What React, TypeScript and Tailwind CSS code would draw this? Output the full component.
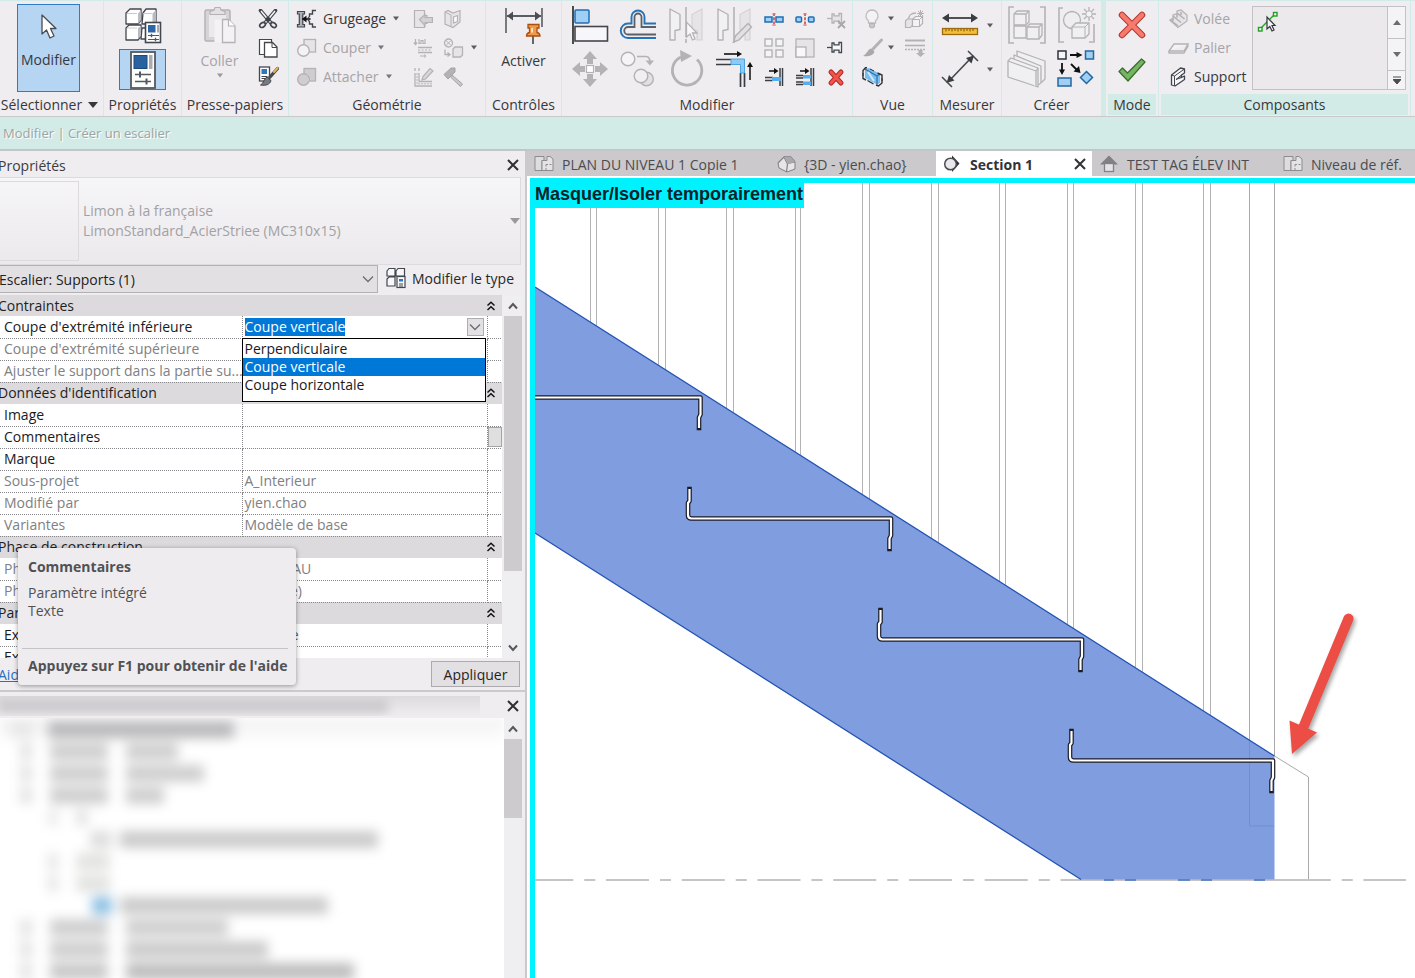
import type { ReactNode } from "react";

/* ---------- shared drawing helpers ---------- */

type SvgProps = { w: number; h: number; children: ReactNode };

function Svg({ w, h, children }: SvgProps) {
  return (
    <svg width={w} height={h} viewBox={`0 0 ${w} ${h}`} fill="none" className="block shrink-0" aria-hidden="true">
      {children}
    </svg>
  );
}

const G = "#b4b2b5";
const GF = "#e6e4e7";
const D = "#43474d";
const B = "#1f6fb5";
const BF = "#9fd0f3";

function Caret({ className = "text-[#5c5c60]" }: { className?: string }) {
  return (
    <svg width="8" height="5" viewBox="0 0 8 5" className={`block shrink-0 ${className}`} aria-hidden="true">
      <path d="M1 .5h6L4 4.5z" fill="currentColor" />
    </svg>
  );
}

function WideCaret({ className }: { className: string }) {
  return (
    <svg width="10" height="6" viewBox="0 0 10 6" className={`block shrink-0 ${className}`} aria-hidden="true">
      <path d="M0 0h10L5 6z" fill="currentColor" />
    </svg>
  );
}

function Cross({ size = 14 }: { size?: number }) {
  return (
    <svg width={size} height={size} viewBox="0 0 14 14" className="block shrink-0" aria-hidden="true">
      <path d="M2 2l10 10M12 2L2 12" stroke="#303034" strokeWidth="2" />
    </svg>
  );
}

function Chevron({ up = false }: { up?: boolean }) {
  return (
    <svg width="12" height="8" viewBox="0 0 12 8" className="block shrink-0" fill="none" aria-hidden="true">
      <path d={up ? "M2 6.5l4-4.5 4 4.5" : "M2 1.5L6 6l4-4.5"} stroke="#58585c" strokeWidth="2" />
    </svg>
  );
}

function ThinChevron() {
  return (
    <svg width="12" height="8" viewBox="0 0 12 8" className="block shrink-0" fill="none" aria-hidden="true">
      <path d="M1 1.500l5 5 5-5" stroke="#6c6c70" strokeWidth="1.300" />
    </svg>
  );
}

function DoubleChevron() {
  return (
    <svg width="10" height="10" viewBox="0 0 10 10" className="block" fill="none" aria-hidden="true">
      <path d="M1.5 4.5L5 1.3l3.5 3.2M1.5 9L5 5.8 8.5 9" stroke="#111" strokeWidth="1.5" />
    </svg>
  );
}

/* ---------- ribbon icons ---------- */

const CursorIcon = () => (
  <Svg w={20} h={28}>
    <path d="M3 2v19l4.5-4 3.5 8 4-2-3.500-7.500H17z" fill="#fff" stroke="#4a4d52" strokeWidth="1.3" strokeLinejoin="round" />
  </Svg>
);

const TypePropsIcon = () => (
  <Svg w={38} h={38}>
    <g stroke={D} strokeWidth="1.3" strokeLinejoin="round">
      <path d="M2 6l4-4h11v11l-3 4H2z" fill="#fff" />
      <path d="M19 6l3-4h10v14l-3 1H18z" fill="#fff" />
      <path d="M2 21l3-3h12v11l-3 4H2z" fill="#fff" />
      <path d="M18 21h5v11h-6z" fill="#fff" />
    </g>
    <path d="M14 6.500L17 3v10l-3 4zM28.500 6.500L32 3v12h-3.500zM14 21l3-2v10l-3 3z" fill="#b9bbc0" />
    <path d="M3 6.500h10M19 6.500h9M3 21h10" stroke="#c9cacd" />
    <rect x="21.500" y="15.500" width="15" height="20" fill="#fff" stroke={D} strokeWidth="1.6" />
    <rect x="24" y="18" width="7.500" height="7.500" fill="#2c66a8" />
    <rect x="33" y="18" width="2" height="7.500" fill="#a8aab0" />
    <path d="M24 28.500h11M24 32.500h11" stroke="#54575d" strokeWidth="1.2" />
    <path d="M27.500 26.800v3.400M31.500 30.800v3.400" stroke="#54575d" strokeWidth="1.4" />
  </Svg>
);

const PropsIcon = () => (
  <Svg w={28} h={38}>
    <rect x="2" y="1" width="24" height="36" fill="#fdfdfd" stroke="#55585e" strokeWidth="1.800" />
    <rect x="5" y="4.500" width="13" height="13" fill="#2a629f" stroke="#1b4a80" />
    <rect x="20" y="4" width="3.500" height="14" fill="#a9abb1" />
    <path d="M6 23.500h16M6 30.500h16" stroke="#54575d" strokeWidth="1.5" />
    <path d="M11 20.500v6M17.500 27.500v6" stroke="#54575d" strokeWidth="2" />
  </Svg>
);

const PasteIcon = () => (
  <Svg w={34} h={38}>
    <rect x="2" y="4" width="25" height="31" rx="1.500" fill="#d6d4d7" stroke={G} strokeWidth="1.500" />
    <path d="M6 8h17v23H6z" fill="#ebe9ec" />
    <path d="M7 8.500V5.500l4-1.500 1-2.500h5L18 4l4 1.500v3z" fill="#e2e0e3" stroke={G} strokeWidth="1.200" />
    <path d="M11.500 13.500h12l8 8v15h-20z" fill="#f3f2f4" />
    <path d="M19.500 13.500h6l6.500 6.500v16.500H19.500z" fill="#f3f2f4" stroke={G} strokeWidth="1.300" />
    <path d="M25.500 13.500v6.500h6.500" stroke={G} strokeWidth="1.200" fill="#fff" />
  </Svg>
);

const ScissorsIcon = () => (
  <Svg w={20} h={20}>
    <path d="M2.500 1.500L13 14M17.500 1.500L7 14" stroke={D} strokeWidth="3.600" strokeLinecap="round" />
    <path d="M3 2l9.500 11.500M17 2L7.500 13.500" stroke="#f7f7f7" strokeWidth="1.500" />
    <circle cx="10" cy="10.500" r="2.400" fill="#3c3f44" />
    <ellipse cx="4.500" cy="16" rx="3" ry="2.200" transform="rotate(-35 4.500 16)" stroke={D} strokeWidth="1.700" fill="#efedf0" />
    <ellipse cx="15.500" cy="16" rx="3" ry="2.200" transform="rotate(35 15.500 16)" stroke={D} strokeWidth="1.700" fill="#efedf0" />
  </Svg>
);

const CopyIcon = () => (
  <Svg w={20} h={20}>
    <path d="M1.500 1.500h12v15h-12z" fill="#fff" stroke={D} strokeWidth="1.200" />
    <path d="M6.500 4.500h8l4.500 4.500v10H6.500z" fill="#fff" stroke={D} strokeWidth="1.300" />
    <path d="M14 4.500V9.500h5" stroke={D} />
  </Svg>
);

const MatchIcon = () => (
  <Svg w={21} h={21}>
    <rect x="1.500" y="1" width="10" height="14" fill="#fff" stroke={D} strokeWidth="1.300" />
    <rect x="3.500" y="3" width="5.500" height="5" fill="#2c78c0" />
    <path d="M3.500 10.500h6M3.500 12.500h4" stroke={D} />
    <path d="M19.500 2.500L12 11" stroke="#4a4a4a" strokeWidth="3.400" strokeLinecap="round" />
    <path d="M19.500 2L16 6" stroke="#e3b264" strokeWidth="2" strokeLinecap="round" />
    <path d="M9 11l4 3.500c-1 4-5 5.500-10.500 4.500C6 17.500 6 12 9 11z" fill="#777a80" stroke={D} />
  </Svg>
);

const CopeIcon = () => (
  <Svg w={21} h={20}>
    <path d="M1.500 2.500h7v2.500H6.800v10.500h1.700V18h-7v-2.500h1.800V5H1.500z" fill="#aeb1b8" stroke={D} strokeWidth="1.200" />
    <path d="M6.500 10h8" stroke="#111" strokeWidth="1.700" />
    <path d="M6 10l4.500-3.500v7z" fill="#111" />
    <path d="M20 1.500h-3.500V5h-3v2.500c-1.500 1-1.500 1.500-1.500 2.500s0 1.500 1.500 2.500V15h3v3H20" stroke={D} strokeWidth="1.400" />
  </Svg>
);

const CutIcon = ({ joined = false }: { joined?: boolean }) => (
  <Svg w={21} h={20}>
    <rect x="8" y="1.500" width="11.500" height="12.500" fill={joined ? "#cfcdd0" : GF} stroke={G} strokeWidth="1.300" />
    <circle cx="7.500" cy="12.500" r="5.800" fill={joined ? "#cfcdd0" : "#f3f2f4"} stroke={G} strokeWidth="1.400" />
    {joined && <path d="M10 8.500v4h3" stroke="#cfcdd0" strokeWidth="3" />}
  </Svg>
);

const WallJoinIcon = () => (
  <Svg w={20} h={20}>
    <path d="M1.500 1.500h10v5H14v8h-2.500v4h-10z" fill={GF} stroke={G} strokeWidth="1.200" />
    <path d="M6.500 10.500l5.500-5v3h7.500v5H12v3z" fill="#d3d1d4" stroke={G} strokeWidth="1.200" />
  </Svg>
);

const PanelIcon = () => (
  <Svg w={20} h={20}>
    <path d="M2 3l3-1.500 5 2.500 7-2.500v11.500L10 18.500 2 15z" fill={GF} stroke={G} strokeWidth="1.200" />
    <path d="M2 3l6 3v12" stroke={G} />
    <path d="M10.500 8l4-1.500v6l-4 1.500z" fill="#fafafa" stroke={G} strokeWidth="1.200" />
  </Svg>
);

const BeamJoinIcon = () => (
  <Svg w={20} h={20}>
    <path d="M2.500 1v5M.800 4.500L2.500 6.500l1.700-2M6 1v4.500h2V2.500h2V5.500h2V1" stroke={G} strokeWidth="1.200" />
    <path d="M5 9.500h14M5 14.500h14" stroke={G} strokeWidth="1.500" />
    <path d="M5 12h14" stroke={G} strokeDasharray="2 1.500" />
    <path d="M7 18h6M11 16.500l2 1.500L11 19.500" stroke={G} />
  </Svg>
);

const SplitIcon = () => (
  <Svg w={21} h={20}>
    <circle cx="5.500" cy="5" r="4" stroke={G} strokeWidth="1.300" />
    <path d="M3 2.500l5 5M8 2.500l-5 5" stroke={G} />
    <path d="M2 11.500v5h4M4.500 14.500l2.500 2-2.500 2" stroke={G} strokeWidth="1.300" />
    <path d="M10 11l2-2h7.500v8l-2 2H10z" fill={GF} stroke={G} strokeWidth="1.300" />
  </Svg>
);

const EditJoinIcon = () => (
  <Svg w={21} h={20}>
    <path d="M2 6v13h17M6 6v8.500h13" stroke={G} strokeWidth="1.300" />
    <path d="M4 6v10.800h15" stroke={G} strokeDasharray="2 1" />
    <path d="M2 1v3M6 1v3" stroke={G} strokeWidth="1.300" />
    <path d="M9 13l1-3.500L17 1.500l3 2.500-7.500 8z" fill="#d9d7da" stroke={G} strokeWidth="1.200" />
  </Svg>
);

const HammerIcon = () => (
  <Svg w={21} h={20}>
    <path d="M9 8l10.500 9-2 2.500L7.500 10z" fill="#c9c7ca" stroke="#a4a2a6" />
    <path d="M1 7.500L8 1h4v4L5 12z" fill="#b4b2b5" stroke="#a4a2a6" />
  </Svg>
);

const ActivateIcon = () => (
  <Svg w={40} h={38}>
    <path d="M2 2v25M38 2v19" stroke="#5a5d62" strokeWidth="1.600" />
    <path d="M3 10h34" stroke="#5a5d62" strokeWidth="2" />
    <path d="M3 10l6-4.500v9zM37 10l-6-4.500v9z" fill="#4a4d52" />
    <path d="M29 30v8" stroke="#55585e" strokeWidth="1.800" />
    <path d="M24 18.500h11v3.500h-2v4.500c2 .5 3 2 3 3.500H22.500c0-1.500 1-3 3-3.500V22H24z" fill="#f29a4c" stroke="#a84f12" strokeWidth="1.300" />
    <path d="M28 22v4.500" stroke="#fde0c0" strokeWidth="2" />
  </Svg>
);

const AlignIcon = () => (
  <Svg w={38} h={38}>
    <path d="M2 0v38" stroke="#222" strokeWidth="1.600" />
    <rect x="4" y="4" width="14" height="13" rx="1" fill={BF} stroke={B} strokeWidth="1.500" />
    <rect x="4" y="20.500" width="32.500" height="14.500" fill="#f7f6f8" stroke={D} strokeWidth="1.600" />
  </Svg>
);

const OffsetIcon = () => (
  <Svg w={38} h={38}>
    <path d="M37 17.500H25.500V11a6.500 6.500 0 0 0-13 0v6.500H9a7.200 7.200 0 0 0 0 14.500h28" stroke="#2573b8" strokeWidth="1.900" />
    <path d="M37 21H22.500V11a3.500 3.500 0 0 0-7 0v10H9a3.700 3.700 0 0 0 0 7.500H37" stroke="#5c5f65" strokeWidth="1.800" />
  </Svg>
);

const MirrorIcon = ({ pencil = false }: { pencil?: boolean }) => (
  <Svg w={38} h={38}>
    <path d="M3 3l10 5.500v15l-5 1V34H3z" fill="#f1f0f2" stroke={G} strokeWidth="1.400" strokeLinejoin="round" />
    <path d="M35 3L25 8.500v15l5 1V34h5z" fill="#e6e4e7" stroke="#d4d2d5" strokeWidth="1.200" />
    <path d="M19 1v36" stroke={G} strokeWidth="1.600" strokeDasharray={pencil ? undefined : "30 2"} />
    {pencil ? (
      <path d="M18.500 36l2-6L33 17.500l3.500 3.500L24 34z" fill="#e2e0e3" stroke={G} strokeWidth="1.400" />
    ) : (
      <path d="M19.500 16v15l3.500-3 2.500 6 2.500-1-2.500-6H30z" fill="#f8f7f9" stroke={G} strokeWidth="1.300" />
    )}
  </Svg>
);

const MoveIcon = () => (
  <Svg w={38} h={38}>
    <g fill={G}>
      <path d="M19 1l7 8h-4v5h-6V9h-4z" />
      <path d="M19 37l7-8h-4v-5h-6v5h-4z" />
      <path d="M1 19l8-7v4h5v6H9v4z" />
      <path d="M37 19l-8-7v4h-5v6h5v4z" />
    </g>
    <rect x="15.500" y="15.500" width="7" height="7" fill="#fff" stroke={G} strokeWidth="1.200" />
  </Svg>
);

const CopyMoveIcon = () => (
  <Svg w={38} h={38}>
    <circle cx="9" cy="9" r="6.800" fill="#f5f4f6" stroke={G} strokeWidth="1.400" />
    <path d="M18 6.500h9c3 0 4 2 4 6" stroke={G} strokeWidth="1.700" />
    <path d="M26.500 10.500h8.500l-4 5z" fill={G} />
    <circle cx="27.500" cy="29" r="6.800" fill="#e2e0e3" stroke={G} strokeWidth="1.400" />
    <circle cx="22" cy="26" r="6.800" fill="#f0eff1" stroke={G} strokeWidth="1.400" />
  </Svg>
);

const RotateIcon = () => (
  <Svg w={38} h={38}>
    <path d="M30 9.500A14.700 14.700 0 1 1 14 7" stroke={G} strokeWidth="2.800" />
    <path d="M13 0l12 6-11 6z" fill={G} />
  </Svg>
);

const TrimIcon = () => (
  <Svg w={38} h={38}>
    <path d="M9 4h15" stroke="#111" strokeWidth="1.600" />
    <path d="M22 1l5 3-5 3z" fill="#111" />
    <path d="M1 9.500h15M1 14.500h15M25.500 23v14M29.500 23v14" stroke="#3a3d42" strokeWidth="1.700" />
    <path d="M16 9h13.500v14h-4V14.500H16z" fill="#8ccbf6" stroke="#4fa3e0" />
    <path d="M35 30V14" stroke="#111" strokeWidth="1.500" />
    <path d="M32 17l3-5 3 5z" fill="#111" />
  </Svg>
);

const SplitElIcon = ({ gap = false }: { gap?: boolean }) => (
  <Svg w={20} h={16}>
    {gap ? (
      <g fill={BF} stroke={B} strokeWidth="1.500">
        <rect x="1" y="6" width="5.500" height="5" rx="1" />
        <rect x="13.500" y="6" width="5.500" height="5" rx="1" />
      </g>
    ) : (
      <g fill={BF} stroke={B} strokeWidth="1.500">
        <rect x="1" y="6" width="7" height="5" />
        <rect x="12" y="6" width="7" height="5" />
      </g>
    )}
    <path d="M10 2v13" stroke="#d23b33" strokeWidth="1.500" strokeDasharray="3 1.200" />
    <path d="M8 3h4M8 14h4" stroke="#e08a84" />
  </Svg>
);

const PinIcon = ({ off = false }: { off?: boolean }) => (
  <Svg w={20} h={20}>
    <path d="M1 9.500h5" stroke={off ? G : D} strokeWidth="1.300" />
    <path d="M6 5v9h2v-1.800h5V14.500h2.500v-10H13V6.800H8V5z" fill={off ? GF : "#f8f8f8"} stroke={off ? G : D} strokeWidth="1.300" />
    {off && <path d="M12 12l7 7M19 12l-7 7" stroke="#a9a7aa" strokeWidth="1.800" />}
  </Svg>
);

const ArrayIcon = () => (
  <Svg w={20} h={20}>
    <g fill="#f5f4f6" stroke={G} strokeWidth="1.400">
      <rect x="1" y="1" width="7" height="7" />
      <rect x="12" y="1" width="7" height="7" />
      <rect x="1" y="12" width="7" height="7" />
      <rect x="12" y="12" width="7" height="7" />
    </g>
  </Svg>
);

const ScaleIcon = () => (
  <Svg w={20} h={20}>
    <rect x="1" y="1" width="18" height="18" fill={GF} stroke={G} strokeWidth="1.300" />
    <rect x="1" y="9" width="10" height="10" fill="#f8f7f9" stroke={G} strokeWidth="1.300" />
  </Svg>
);

const ExtendIcon = ({ multi = false }: { multi?: boolean }) => (
  <Svg w={20} h={20}>
    <path d="M5 4h6" stroke="#111" strokeWidth="1.500" />
    <path d="M10 1l4.500 3L10 7z" fill="#111" />
    <path d="M16 1v18M18.500 1v18" stroke="#3a3d42" strokeWidth="1.500" />
    {multi ? (
      <>
        <path d="M1 8.500h7M1 11h7M1 15h7M1 17.500h7" stroke="#3a3d42" strokeWidth="1.300" />
        <path d="M8 9.800h8M8 16.200h8" stroke="#58aeea" strokeWidth="3.600" />
      </>
    ) : (
      <>
        <path d="M1 10.500h8M1 13.500h8" stroke="#3a3d42" strokeWidth="1.300" />
        <path d="M8 12h9" stroke="#58aeea" strokeWidth="4" />
      </>
    )}
  </Svg>
);

const DeleteIcon = () => (
  <Svg w={20} h={20}>
    <path d="M5 5l10 11M15 5L5 16" stroke="#b02a25" strokeWidth="5" strokeLinecap="round" />
    <path d="M5 5l10 11M15 5L5 16" stroke="#f2544c" strokeWidth="3" strokeLinecap="round" />
  </Svg>
);

const BulbIcon = () => (
  <Svg w={20} h={20}>
    <path d="M10 1a6 6 0 0 0-3.500 10.800V14h7v-2.200A6 6 0 0 0 10 1z" fill="#f3f2f4" stroke="#c0bec1" strokeWidth="1.300" />
    <path d="M7.500 14.500h5v3.500l-2.500 1-2.500-1z" fill="#c8c6c9" stroke={G} />
  </Svg>
);

const ShapesStarIcon = () => (
  <Svg w={22} h={20}>
    <path d="M5 10c-1-3 2-6 7-6" stroke={G} strokeWidth="1.300" />
    <path d="M1.500 12l2-2h5v6l-2 2.500h-5z" fill={GF} stroke={G} strokeWidth="1.200" />
    <path d="M8.500 10.500l3-3h7v7l-3 3h-7z" fill="#f3f2f4" stroke={G} strokeWidth="1.200" />
    <path d="M8.500 10.500h7v7M15.500 10.500l3-3" stroke={G} />
    <path d="M16.500 1v7M13 4.500h7M14 2l5 5M19 2l-5 5" stroke={G} />
  </Svg>
);

const BrushIcon = () => (
  <Svg w={21} h={20}>
    <path d="M19.500 2L11 11" stroke={G} strokeWidth="3" strokeLinecap="round" />
    <path d="M9 10.500l3.500 3c-1 4-6 5.500-11.500 4.500C4.500 16.500 6 11 9 10.500z" fill="#aaa8ab" />
  </Svg>
);

const LinesIcon = () => (
  <Svg w={22} h={20}>
    <path d="M1 2.500h20" stroke={G} strokeWidth="2" />
    <path d="M1 7.500h20" stroke={G} strokeWidth="1.600" />
    <path d="M1 11.500h20" stroke={G} strokeWidth="1.300" strokeDasharray="2 1" />
    <path d="M14.500 12h4v3h2.500l-4.500 4-4.500-4h2.500z" fill={G} />
  </Svg>
);

const BoxIcon = () => (
  <Svg w={21} h={20}>
    <path d="M3 2l4-1 11 6v9l-3 1.500L3 11z" fill="#79bdf0" />
    <path d="M3 2l12 7v8.500M15 9l3-2" stroke="#2f6fa8" strokeWidth="1.200" />
    <path d="M6 5l6 9" stroke="#cfe8fb" strokeWidth="2" />
    <path d="M5 .800H3.500L1 3.500v8L4 13M15.500 6L20 8v8l-3.500 3-2.500-1M5.500 13.500l6 3.500" stroke="#2f3338" strokeWidth="1.400" />
    <path d="M1 6v3M20 11v3M8 2l4 2" stroke="#2f3338" />
  </Svg>
);

const MeasureIcon = () => (
  <Svg w={38} h={26}>
    <path d="M5 6h28" stroke="#333" strokeWidth="1.700" />
    <path d="M1 6l7-4.500v9zM37 6l-7-4.500v9z" fill="#3a3d42" />
    <rect x="1.500" y="16.500" width="35" height="6" fill="#f3be35" stroke="#9b6c12" strokeWidth="1.300" />
    <path d="M5 17v2.500M8 17v2M11 17v2.500M14 17v2M17 17v2.500M20 17v2M23 17v2.500M26 17v2M29 17v2.500M32 17v2" stroke="#7c5408" />
  </Svg>
);

const DimensionIcon = () => (
  <Svg w={38} h={38}>
    <path d="M1 27l10 10M27 1l10 10" stroke="#44474c" strokeWidth="1.500" />
    <path d="M8 31L31 7" stroke="#44474c" strokeWidth="1.600" />
    <path d="M5.500 33l2.500-8 5.500 5.500zM33 5.500l-2.500 8L25 8z" fill="#3a3d42" />
  </Svg>
);

const GroupIcon = () => (
  <Svg w={40} h={40}>
    <path d="M7 2H2v36h5M33 2h5v36h-5" stroke={G} strokeWidth="1.600" />
    <g fill="#f0eff1" stroke={G} strokeWidth="1.300" strokeLinejoin="round">
      <path d="M7 9l3-3h12v11l-3 3H7z" />
      <path d="M7 21h12v12H7z" />
      <path d="M20 22l3-3h12v11l-3 4H20z" />
      <path d="M7 9h12v11M19 9l3-3M20 22h12v11M32 22l3-3" />
    </g>
  </Svg>
);

const AssemblyIcon = () => (
  <Svg w={40} h={40}>
    <path d="M7 3H3v34h5M33 37h5V19" stroke={G} strokeWidth="1.600" />
    <circle cx="16" cy="15" r="8.500" fill="#eeedef" stroke={G} strokeWidth="1.300" />
    <path d="M16 22l4-4h13v11l-4 4H16z" fill="#f0eff1" stroke={G} strokeWidth="1.300" />
    <path d="M16 22h13v11M29 22l4-4" stroke={G} />
    <path d="M33 2v14M26 9h14M28 4l10 10M38 4L28 14" stroke={G} strokeWidth="1.300" />
    <circle cx="33" cy="9" r="3.200" fill="#f4f3f5" stroke={G} />
  </Svg>
);

const PartsIcon = () => (
  <Svg w={42} h={40}>
    <g fill="#f0eff1" stroke={G} strokeWidth="1.300" strokeLinejoin="round">
      <path d="M11 2l28 10v18l-3 3L11 20z" />
      <path d="M8 6l27 11v17l-3 2L8 22z" />
      <path d="M2 12l3-3 27 10v19L2 28z" />
      <path d="M2 12l28 10v16M30 22l2-3" />
    </g>
  </Svg>
);

const SimilarIcon = () => (
  <Svg w={40} h={40}>
    <rect x="2" y="2" width="8" height="8" fill="#f6f5f7" stroke="#2e3237" strokeWidth="1.500" />
    <path d="M14 6h8M6 14v8M15 15l6 6" stroke="#111" strokeWidth="1.800" />
    <path d="M20.500 3l6 3-6 3zM3 20.500h6l-3 5.500zM24.500 24l-1.500-7-5.500 5.500z" fill="#111" />
    <g fill={BF} stroke="#25679f" strokeWidth="1.500">
      <rect x="29.500" y="2" width="8" height="8" />
      <rect x="2" y="29" width="13" height="8" />
      <path d="M30.500 22.500l6 6-6 6-6-6z" />
    </g>
  </Svg>
);

const CancelIcon = () => (
  <Svg w={30} h={30}>
    <path d="M5 6l20 20M25 6L5 26" stroke="#b4372f" strokeWidth="6.500" strokeLinecap="round" />
    <path d="M5 6l20 20M25 6L5 26" stroke="#f77a6f" strokeWidth="4.500" strokeLinecap="round" />
  </Svg>
);

const AcceptIcon = () => (
  <Svg w={30} h={26}>
    <path d="M2 14.500L5.500 11l5 5L24.500 2 28 5 11 24z" fill="#78b562" stroke="#39702a" strokeWidth="1.300" strokeLinejoin="round" />
  </Svg>
);

const RunIcon = () => (
  <Svg w={22} h={20}>
    <path d="M2 11l3-2v-3l4-1.500V2l4-1 6 5v6l-9 6.500z" fill={GF} stroke={G} strokeWidth="1.200" />
    <path d="M2 11l8 6M5 7l8 6.500M9 4l7.500 6M5 9v3M9 5v3.500M13 3v3" stroke={G} strokeWidth="1.600" />
  </Svg>
);

const LandingIcon = () => (
  <Svg w={22} h={20}>
    <path d="M1 13l5-7h14l-4 7zM1 13v2h15l4-7V6" fill="#f3f2f4" stroke={G} strokeWidth="1.300" />
  </Svg>
);

const SupportIcon = () => (
  <Svg w={22} h={22}>
    <path d="M3.500 9L12.500 2l4 1v4l-3 2v2.500l3-1.500v3.500L7 20l-3.500-1z" fill="#f6f6f8" stroke={D} strokeWidth="1.300" strokeLinejoin="round" />
    <path d="M3.500 9l3 1 10-7M6.500 10v9.500" stroke={D} />
    <path d="M13.500 9L8 13.500l5.500-2z" fill="#8d9096" stroke={D} />
  </Svg>
);

const PickLineIcon = () => (
  <Svg w={22} h={22}>
    <path d="M3 18L18 3" stroke="#28a428" strokeWidth="1.500" />
    <rect x="1.500" y="16.500" width="3.500" height="3.500" fill="#fff" stroke="#1fa01f" strokeWidth="1.400" />
    <rect x="16.500" y="1.500" width="3.500" height="3.500" fill="#fff" stroke="#1fa01f" strokeWidth="1.400" />
    <path d="M10 6v12l2.800-2.500L15 20l2-1-2-4.500h3z" fill="#f4f4f6" stroke="#33363b" strokeWidth="1.200" />
  </Svg>
);

/* ---------- ribbon ---------- */

function Panel({ title, width, tinted = false, children }: { title: ReactNode; width: string; tinted?: boolean; children: ReactNode }) {
  return (
    <section className={`flex flex-col border-r border-[#d3ebe8] ${width}`}>
      <div className="flex h-[93px]">{children}</div>
      <h2 className={`flex h-[21px] items-center justify-center ${tinted ? "mx-0.5 bg-[#d3ebe7]" : ""}`}>{title}</h2>
    </section>
  );
}

function IconButton({ label, size, children }: { label: string; size: string; children: ReactNode }) {
  return (
    <button type="button" aria-label={label} title={label} className={`flex shrink-0 items-center justify-center ${size}`}>
      {children}
    </button>
  );
}

const SMALL = "h-[29px] w-[22px]";
const LARGE = "h-[44px] w-12";

function Ribbon() {
  return (
    <div className="flex h-[117px] shrink-0 overflow-hidden border-t border-b border-t-[#d3ebe8] border-b-[#c9c9cc] bg-[#efedf0]">
      <Panel
        title={
          <button type="button" className="-ml-1 flex items-center gap-1.5">
            Sélectionner
            <WideCaret className="text-[#38383c]" />
          </button>
        }
        width="w-[104px]"
      >
        <button type="button" className="mt-[3px] ml-[17px] flex h-[88px] w-[63px] flex-col items-center border border-[#2f7cc4] bg-[#b5d5f2] pt-2">
          <CursorIcon />
          <span className="mt-2">Modifier</span>
        </button>
      </Panel>

      <Panel title="Propriétés" width="w-[78px]">
        <div className="flex grow flex-col items-center pt-[5px]">
          <IconButton label="Propriétés du type" size="h-10 w-12"><TypePropsIcon /></IconButton>
          <button type="button" aria-label="Propriétés" className="mt-[3px] flex h-[41px] w-[47px] items-center justify-center border border-[#2f7cc4] bg-[#b5d5f2]">
            <PropsIcon />
          </button>
        </div>
      </Panel>

      <Panel title="Presse-papiers" width="w-[107px]">
        <button type="button" disabled className="flex w-[75px] flex-col items-center pt-[5px] text-[#a6a4a7]">
          <PasteIcon />
          <span className="mt-1.5">Coller</span>
          <Caret className="mt-0.5 text-[#9a989b]" />
        </button>
        <div className="flex flex-col pt-[3px]">
          <IconButton label="Couper dans le presse-papiers" size={SMALL}><ScissorsIcon /></IconButton>
          <IconButton label="Copier dans le presse-papiers" size={SMALL}><CopyIcon /></IconButton>
          <IconButton label="Harmoniser les propriétés" size={SMALL}><MatchIcon /></IconButton>
        </div>
      </Panel>

      <Panel title="Géométrie" width="w-[197px]">
        <div className="flex w-[123px] flex-col pt-[3px] pl-[7px]">
          <button type="button" className="flex h-[29px] items-center gap-1.5"><CopeIcon />Grugeage<Caret /></button>
          <button type="button" className="flex h-[29px] items-center gap-1.5 text-[#a6a4a7]"><CutIcon />Couper<Caret className="text-[#77757a]" /></button>
          <button type="button" className="flex h-[29px] items-center gap-1.5 text-[#a6a4a7]"><CutIcon joined />Attacher<Caret className="text-[#77757a]" /></button>
        </div>
        <div className="flex flex-col pt-[3px]">
          <IconButton label="Attache de toit" size={SMALL}><WallJoinIcon /></IconButton>
          <IconButton label="Attaches de poutres" size={SMALL}><BeamJoinIcon /></IconButton>
          <IconButton label="Jonctions de murs" size={SMALL}><EditJoinIcon /></IconButton>
        </div>
        <div className="ml-2 flex flex-col pt-[3px]">
          <IconButton label="Diviser la face" size={SMALL}><PanelIcon /></IconButton>
          <div className="flex items-center gap-1.5">
            <IconButton label="Peindre" size={SMALL}><SplitIcon /></IconButton>
            <Caret />
          </div>
          <IconButton label="Démolir" size={SMALL}><HammerIcon /></IconButton>
        </div>
      </Panel>

      <Panel title="Contrôles" width="w-[76px]">
        <button type="button" className="flex grow flex-col items-center pt-[5px]">
          <ActivateIcon />
          <span className="mt-1.5">Activer</span>
        </button>
      </Panel>

      <Panel title="Modifier" width="w-[291px]">
        <div className="grid grid-cols-4 content-start pt-[2px] pl-1">
          <IconButton label="Aligner" size={LARGE}><AlignIcon /></IconButton>
          <IconButton label="Décaler" size={LARGE}><OffsetIcon /></IconButton>
          <IconButton label="Symétrie - Choisir l'axe" size={LARGE}><MirrorIcon /></IconButton>
          <IconButton label="Symétrie - Dessiner l'axe" size={LARGE}><MirrorIcon pencil /></IconButton>
          <IconButton label="Déplacer" size={LARGE}><MoveIcon /></IconButton>
          <IconButton label="Copier" size={LARGE}><CopyMoveIcon /></IconButton>
          <IconButton label="Rotation" size={LARGE}><RotateIcon /></IconButton>
          <IconButton label="Ajuster en angle" size={LARGE}><TrimIcon /></IconButton>
        </div>
        <div className="ml-[5px] grid grid-cols-3 content-start gap-x-[9px] pt-[3px]">
          <IconButton label="Scinder l'élément" size={SMALL}><SplitElIcon /></IconButton>
          <IconButton label="Scinder avec espace" size={SMALL}><SplitElIcon gap /></IconButton>
          <IconButton label="Déverrouiller" size={SMALL}><PinIcon off /></IconButton>
          <IconButton label="Réseau" size={SMALL}><ArrayIcon /></IconButton>
          <IconButton label="Mettre à l'échelle" size={SMALL}><ScaleIcon /></IconButton>
          <IconButton label="Verrouiller" size={SMALL}><PinIcon /></IconButton>
          <IconButton label="Prolonger un élément" size={SMALL}><ExtendIcon /></IconButton>
          <IconButton label="Prolonger plusieurs éléments" size={SMALL}><ExtendIcon multi /></IconButton>
          <IconButton label="Supprimer" size={SMALL}><DeleteIcon /></IconButton>
        </div>
      </Panel>

      <Panel title="Vue" width="w-[80px]">
        <div className="flex flex-col pt-[3px] pl-2">
          <div className="flex items-center gap-1"><IconButton label="Masquer dans la vue" size={SMALL}><BulbIcon /></IconButton><Caret /></div>
          <div className="flex items-center gap-1"><IconButton label="Remplacer les graphismes" size={SMALL}><BrushIcon /></IconButton><Caret /></div>
          <IconButton label="Zone de sélection" size={SMALL}><BoxIcon /></IconButton>
        </div>
        <div className="ml-[9px] flex flex-col pt-[3px]">
          <IconButton label="Afficher les éléments cachés" size={SMALL}><ShapesStarIcon /></IconButton>
          <IconButton label="Style de ligne" size={SMALL}><LinesIcon /></IconButton>
        </div>
      </Panel>

      <Panel title="Mesurer" width="w-[69px]">
        <div className="flex flex-col pt-[2px] pl-[3px]">
          <div className="flex items-center gap-0.5"><IconButton label="Mesurer" size={LARGE}><MeasureIcon /></IconButton><Caret /></div>
          <div className="flex items-center gap-0.5"><IconButton label="Cote alignée" size={LARGE}><DimensionIcon /></IconButton><Caret /></div>
        </div>
      </Panel>

      <Panel title="Créer" width="w-[100px]">
        <div className="grid grow grid-cols-2 content-start justify-items-center pt-[2px]">
          <IconButton label="Créer un groupe" size={LARGE}><GroupIcon /></IconButton>
          <IconButton label="Créer un assemblage" size={LARGE}><AssemblyIcon /></IconButton>
          <IconButton label="Créer des pièces" size={LARGE}><PartsIcon /></IconButton>
          <IconButton label="Créer un élément similaire" size={LARGE}><SimilarIcon /></IconButton>
        </div>
      </Panel>

      <div className="w-1 shrink-0 bg-[#d3ebe7]" />

      <Panel title="Mode" width="w-[53px]" tinted>
        <div className="flex grow flex-col items-center gap-4 pt-2">
          <IconButton label="Annuler le mode de modification" size="size-[30px]"><CancelIcon /></IconButton>
          <IconButton label="Quitter le mode de modification" size="size-[30px]"><AcceptIcon /></IconButton>
        </div>
      </Panel>

      <Panel title="Composants" width="min-w-[250px] flex-1" tinted>
        <div className="flex w-[93px] flex-col pt-[3px] pl-[9px]">
          <button type="button" className="flex h-[29px] items-center gap-1 text-[#a6a4a7]"><RunIcon />Volée</button>
          <button type="button" className="flex h-[29px] items-center gap-1 text-[#a6a4a7]"><LandingIcon />Palier</button>
          <button type="button" className="flex h-[29px] items-center gap-1"><SupportIcon />Support</button>
        </div>
        <div className="mt-[5px] mr-[4px] flex h-[84px] grow border border-[#c3c1c4] bg-[#ebe9ec]">
          <div className="grow pt-1 pl-1"><IconButton label="Choisir les supports" size="size-[22px]"><PickLineIcon /></IconButton></div>
          <div className="flex w-[18px] flex-col divide-y divide-[#c3c1c4] border-l border-[#c3c1c4] bg-[#f4f3f5]">
            <button type="button" aria-label="Ligne précédente" className="flex h-8 items-center justify-center"><svg width="8" height="5" viewBox="0 0 8 5" aria-hidden="true"><path d="M0 5h8L4 0z" fill="#6b6b70" /></svg></button>
            <button type="button" aria-label="Ligne suivante" className="flex h-8 items-center justify-center"><svg width="8" height="5" viewBox="0 0 8 5" aria-hidden="true"><path d="M0 0h8L4 5z" fill="#6b6b70" /></svg></button>
            <button type="button" aria-label="Développer" className="flex grow items-center justify-center"><svg width="8" height="8" viewBox="0 0 8 8" aria-hidden="true"><path d="M0 1h8M0 3.500h8L4 8z" stroke="#4b4b50" fill="#4b4b50" /></svg></button>
          </div>
        </div>
      </Panel>
      <div className="w-1 shrink-0" />
    </div>
  );
}

/* ---------- properties palette ---------- */

type Row = { name: string; value?: string; muted?: boolean; link?: boolean; combo?: boolean; button?: boolean };
type Group = { title: string; rows: Row[] };

const GROUPS: Group[] = [
  {
    title: "Contraintes",
    rows: [
      { name: "Coupe d'extrémité inférieure", combo: true },
      { name: "Coupe d'extrémité supérieure", muted: true },
      { name: "Ajuster le support dans la partie su...", muted: true },
    ],
  },
  {
    title: "Données d'identification",
    rows: [
      { name: "Image" },
      { name: "Commentaires", button: true },
      { name: "Marque" },
      { name: "Sous-projet", value: "A_Interieur", muted: true },
      { name: "Modifié par", value: "yien.chao", muted: true },
      { name: "Variantes", value: "Modèle de base", muted: true },
    ],
  },
  {
    title: "Phase de construction",
    rows: [
      { name: "Phase de création", value: "NOUVEAU", muted: true },
      { name: "Phase de démolition", value: "Aucun(e)", muted: true },
    ],
  },
  {
    title: "Paramètres IFC",
    rows: [
      { name: "Exporter au format IFC", value: "Par type", link: true },
      { name: "Exporter au format IFC sous" },
    ],
  },
];

const CUTS = ["Perpendiculaire", "Coupe verticale", "Coupe horizontale"];

function CutPicker() {
  return (
    <div className="relative flex h-[21px] items-center">
      <input
        aria-label="Coupe d'extrémité inférieure"
        defaultValue="Coupe verticale"
        className="field-sizing-content h-[18px] bg-[#0078d7] text-white outline-none"
      />
      <button type="button" aria-label="Ouvrir la liste" className="mr-[3px] ml-auto flex h-[18px] w-[17px] items-center justify-center border border-[#adadb0] bg-[#e3e1e4]">
        <ThinChevron />
      </button>
      <ul role="listbox" aria-label="Types de coupe" className="absolute top-[22px] -left-[3px] z-10 h-[64px] w-[244px] border border-black bg-white">
        {CUTS.map((cut) => (
          <li
            key={cut}
            role="option"
            aria-selected={cut === "Coupe verticale"}
            className={`h-[18px] pl-0.5 leading-[18px] first:mt-px ${cut === "Coupe verticale" ? "bg-[#0078d7] text-white" : "text-[#1a1a1a]"}`}
          >
            {cut}
          </li>
        ))}
      </ul>
    </div>
  );
}

function PropertyTable() {
  return (
    <table className="w-[504px] table-fixed border-collapse text-left leading-5">
      <colgroup>
        <col className="w-[244px]" />
        <col className="w-[245px]" />
        <col className="w-[15px]" />
      </colgroup>
      {GROUPS.map((group, index) => (
        <tbody key={group.title}>
          <tr className={`bg-[#dcdadd] ${index === 0 ? "h-[21px]" : "h-[22px]"}`}>
            <th colSpan={2} className="p-0 font-normal text-[#1f1f22]">{group.title}</th>
            <th className="p-0">
              <button type="button" aria-label={`Réduire ${group.title}`} className="-ml-0.5 flex size-3 items-center justify-center"><DoubleChevron /></button>
            </th>
          </tr>
          {group.rows.map((row) => (
            <tr key={row.name} className={`h-[22px] bg-white ${row.muted ? "text-[#808083]" : "text-[#1a1a1c]"}`}>
              <td className="border-r border-b border-dotted border-[#88888c] p-0 pl-1.5 whitespace-nowrap">{row.name}</td>
              <td className={`border-r border-b border-dotted border-[#88888c] p-0 pl-0.5 ${row.link ? "text-[#2a6fc0]" : ""}`}>
                {row.combo ? <CutPicker /> : row.value}
              </td>
              <td className="border-r border-b border-dotted border-[#88888c] p-0">
                {row.button && <button type="button" aria-label="Parcourir" className="block h-5 w-3.5 border border-[#a5a5a8] bg-[#dfdfe0]" />}
              </td>
            </tr>
          ))}
        </tbody>
      ))}
    </table>
  );
}

function Properties() {
  return (
    <section className="relative flex shrink-0 flex-col">
      <header className="flex h-[26px] items-center justify-between pt-0.5 pr-[5px]">
        <h2 className="text-[#3c3c40]">Propriétés</h2>
        <button type="button" aria-label="Fermer la palette"><Cross /></button>
      </header>

      <div className="mr-[4px] flex h-[88px] items-center border border-[#dddbde] bg-linear-to-b from-[#f6f5f7] to-[#ebe9ec] text-[#a3a1a4]">
        <div className="h-[80px] w-[80px] shrink-0 border border-[#dcdadd]" />
        <div className="ml-1 grow leading-5">
          <p>Limon à la française</p>
          <p>LimonStandard_AcierStriee (MC310x15)</p>
        </div>
        <WideCaret className="text-[#9b999c]" />
      </div>

      <div className="flex h-[30px] items-start gap-2">
        <div className="relative flex h-7 w-[380px] items-center">
          <select aria-label="Filtre de sélection" className="h-7 w-full appearance-none border border-[#b3b1b4] bg-[#e2e0e3] text-[#222]">
            <option>Escalier: Supports (1)</option>
          </select>
          <span className="pointer-events-none absolute right-1"><ThinChevron /></span>
        </div>
        <button type="button" className="flex h-[26px] items-center gap-1.5 text-[#28282b]">
          <Svg w={20} h={22}>
            <g fill="#f8f8f9" stroke={D} strokeWidth="1.200">
              <path d="M1 4l2-2.500h6V9H1zM10 4l2-2.500h6.500V9H10zM1 12l2-2h6v9H1z" />
              <rect x="11" y="9.500" width="8" height="11" />
            </g>
            <path d="M13 12h4v2.500h-4z" fill="#2c78c0" />
            <path d="M13 17h4M13 19h4" stroke={D} />
          </Svg>
          Modifier le type
        </button>
      </div>

      <div className="flex h-[363px]">
        <div className="w-[504px] overflow-hidden"><PropertyTable /></div>
        <div className="ml-px flex w-5 flex-col items-center justify-between bg-[#efeef0]">
          <span className="flex h-[21px] items-center"><Chevron up /></span>
          <span className="mb-auto h-[255px] w-[18px] bg-[#cdcbce]" />
          <span className="flex h-[21px] items-center"><Chevron /></span>
        </div>
      </div>

      <div className="flex h-[34px] items-center justify-between border-b-2 border-[#cbc9cc] pr-[5px]">
        <a href="#aide" className="text-[#2a6fc0] underline">Aide des propriétés</a>
        <button type="button" className="h-[26px] w-[89px] border border-[#acaaad] bg-[#e2e0e3] text-[#1f1f22]">Appliquer</button>
      </div>

      <div role="tooltip" className="absolute top-[397px] left-5 z-20 w-[278px] rounded-sm bg-[#eeecef] pt-2.5 pb-2 whitespace-nowrap text-[#515154] shadow-[0_1px_5px_rgba(0,0,0,0.4)]">
        <p className="pl-2.5 leading-[18px] font-bold">Commentaires</p>
        <p className="mt-2 pl-2.5 leading-[18px]">Paramètre intégré</p>
        <p className="pl-2.5 leading-[18px]">Texte</p>
        <hr className="mr-2 ml-1 mt-7 border-[#c5c3c6]" />
        <p className="mt-2 pl-2.5 leading-[18px] font-bold">Appuyez sur F1 pour obtenir de l'aide</p>
        <div className="h-0.5" />
      </div>
    </section>
  );
}

/* ---------- project browser (content obscured) ---------- */

type Smear = { gap: number; width: number; tone: string };

const TREE: Smear[][] = [
  [{ gap: 12, width: 24, tone: "bg-[#e8e8e9]" }, { gap: 14, width: 186, tone: "bg-[#b9b8ba]" }],
  [{ gap: 22, width: 12, tone: "bg-[#e2e3e4]" }, { gap: 18, width: 58, tone: "bg-[#cfcfd0]" }, { gap: 18, width: 52, tone: "bg-[#cfcfd0]" }],
  [{ gap: 22, width: 12, tone: "bg-[#e2e3e4]" }, { gap: 18, width: 58, tone: "bg-[#cfcfd0]" }, { gap: 18, width: 78, tone: "bg-[#cfcfd0]" }],
  [{ gap: 22, width: 12, tone: "bg-[#e2e3e4]" }, { gap: 18, width: 58, tone: "bg-[#cfcfd0]" }, { gap: 18, width: 38, tone: "bg-[#cfcfd0]" }],
  [{ gap: 50, width: 10, tone: "bg-[#e9eaeb]" }, { gap: 18, width: 12, tone: "bg-[#e4e4e4]" }],
  [{ gap: 92, width: 22, tone: "bg-[#dedede]" }, { gap: 8, width: 258, tone: "bg-[#cbcbcc]" }],
  [{ gap: 50, width: 10, tone: "bg-[#e4e5e6]" }, { gap: 18, width: 34, tone: "bg-[#e3e4e1]" }],
  [{ gap: 50, width: 10, tone: "bg-[#e4e5e6]" }, { gap: 18, width: 34, tone: "bg-[#e3e4e1]" }],
  [{ gap: 94, width: 20, tone: "bg-[#8cc0e4]" }, { gap: 8, width: 208, tone: "bg-[#cbcbcc]" }],
  [{ gap: 22, width: 12, tone: "bg-[#e2e3e4]" }, { gap: 18, width: 58, tone: "bg-[#cfcfd0]" }, { gap: 18, width: 102, tone: "bg-[#cfcfd0]" }],
  [{ gap: 22, width: 12, tone: "bg-[#e2e3e4]" }, { gap: 18, width: 58, tone: "bg-[#cfcfd0]" }, { gap: 18, width: 142, tone: "bg-[#cbcbcc]" }],
  [{ gap: 22, width: 12, tone: "bg-[#e2e3e4]" }, { gap: 18, width: 58, tone: "bg-[#c8c8c9]" }, { gap: 18, width: 228, tone: "bg-[#bdbdbe]" }],
];

function Browser() {
  return (
    <section aria-label="Arborescence du projet" className="relative flex min-h-0 grow flex-col overflow-hidden">
      <header className="flex h-[26px] shrink-0 items-center justify-end pt-0.5 pr-[5px]">
        <div className="mr-[26px] flex h-5 grow items-center overflow-hidden bg-linear-to-b from-[#dddbde] to-[#efedf0]">
          <div className="h-3.5 w-[390px] bg-[#cccacd] blur-[5px]" />
        </div>
        <button type="button" aria-label="Fermer l'arborescence"><Cross /></button>
      </header>
      <div className="flex min-h-0 grow">
        <div className="w-[506px] overflow-hidden bg-white">
          <div className="bg-linear-to-b from-[#f1f0f2] to-white to-10% blur-[6px]">
            {TREE.map((row, i) => (
              <div key={i} className="flex h-[22px] items-center">
                {row.map((s, j) => (
                  <span key={j} className={`h-[17px] shrink-0 ${s.tone}`} style={{ marginLeft: s.gap, width: s.width }} />
                ))}
              </div>
            ))}
          </div>
        </div>
        <div className="flex w-[18px] flex-col items-center bg-[#efeef0]">
          <span className="flex h-[21px] items-center"><Chevron up /></span>
          <span className="h-[79px] w-[18px] bg-[#cdcbce]" />
        </div>
      </div>
    </section>
  );
}

/* ---------- view area ---------- */

const PlanTabIcon = () => (
  <Svg w={20} h={18}>
    <path d="M1 1.500h9v4h-2v10H1z" fill="#dddcde" stroke="#8b8b90" />
    <path d="M8 5.500h5v-4h3L19 4v11.500H8z" fill="#e4e3e5" stroke="#8b8b90" />
    <path d="M12 9.500h7M12 9.500v6" stroke="#8b8b90" strokeDasharray="2 1.500" />
  </Svg>
);

const HouseTabIcon = () => (
  <Svg w={19} h={18}>
    <path d="M1 8l6-6h7l4 5v7l-8 3-8-4z" fill="#e6e5e7" stroke="#808085" />
    <path d="M1 8l6-6 3.500 7-1 8M10.500 8.500L18 7M7 2h7l4 5" stroke="#808085" strokeWidth="1.200" />
    <path d="M7 2h7l4 5-7.500 2z" fill="#a9a9ad" />
  </Svg>
);

const SectionTabIcon = () => (
  <Svg w={17} h={18}>
    <path d="M9 0.500L16.500 8.500 9 17z" fill="#2c2e32" />
    <circle cx="7.500" cy="9" r="5.800" fill="#e9e9eb" stroke="#4a4c50" strokeWidth="1.500" />
  </Svg>
);

const ElevTabIcon = () => (
  <Svg w={20} h={18}>
    <path d="M10 .500L19 9.500H1z" fill="#808085" />
    <rect x="5.500" y="8.500" width="9" height="8" fill="#e3e2e4" stroke="#808085" strokeWidth="1.300" />
  </Svg>
);

function Tabs() {
  const tab = "flex shrink-0 items-center gap-2 pt-px pl-[7px] text-[#4c4c50]";
  return (
    <nav className="flex h-[25px] overflow-hidden bg-[#cbc9cc]" aria-label="Vues ouvertes">
      <button type="button" className={`${tab} w-[243px]`}><PlanTabIcon />PLAN DU NIVEAU 1 Copie 1</button>
      <button type="button" className={`${tab} w-[166px]`}><HouseTabIcon />{"{3D - yien.chao}"}</button>
      <div className="flex w-[156px] shrink-0 items-center bg-white pt-px pr-[5px] pl-[7px]">
        <button type="button" className="flex grow items-center gap-2.5 font-bold text-[#333337]"><SectionTabIcon />Section 1</button>
        <button type="button" aria-label="Fermer Section 1"><Cross /></button>
      </div>
      <button type="button" className={`${tab} w-[184px]`}><ElevTabIcon />TEST TAG ÉLEV INT</button>
      <button type="button" className={tab}><PlanTabIcon />Niveau de réf.</button>
    </nav>
  );
}

const BALUSTERS = [590, 596, 658, 665, 726, 733, 795, 800, 862, 869, 931, 938, 999, 1005, 1067, 1073, 1135, 1142, 1203, 1210];
const railY = (x: number) => 287 + (x - 535) * 0.634;

const TREADS: [number, number][] = [[0, 0], [-191, -121], [-382, -242]];
const TREAD = "M1071.500 731v12l-1.500 2v12q0 3.500 3.500 3.500H1273v17l-1.500 3v10.500";
const TREAD_END = "M532 397.500H700.500v17l-1.500 3v10.500";

function Tread({ d }: { d: string }) {
  return (
    <>
      <path d={d} stroke="#1b1b24" strokeWidth="4.600" strokeLinecap="square" strokeLinejoin="round" />
      <path d={d} stroke="#fff" strokeWidth="2.200" strokeLinejoin="round" />
    </>
  );
}

function SectionDrawing() {
  return (
    <svg viewBox="535 183 880 795" preserveAspectRatio="xMinYMin slice" className="block h-full w-full" fill="none" role="img" aria-label="Coupe de l'escalier">
      {BALUSTERS.map((x) => (
        <path key={x} d={`M${x + 0.5} 183V${railY(x)}`} stroke="#b4b3b6" />
      ))}
      <path d="M1249.500 183V740M1274.500 183V756M1274.500 756L1308.500 777V880" stroke="#a9a8ab" />
      <path d="M530.250 880H1406" stroke="#c6c4c7" strokeWidth="2" strokeDasharray="43 11 11 10.750" />
      <path d="M1081 880h210" stroke="#c6c4c7" strokeWidth="2" />
      <path d="M535 287L1274.500 756V879.500H1081L535 533z" fill="#809edf" />
      <path d="M535 287L1274.500 756M535 533L1081 879.500" stroke="#2353b4" strokeWidth="1.300" />
      <path d="M1249.500 741v85H1274" stroke="#6f8fd2" />
      <path d="M1104 880h10M1125 880h11M1178 880h12M1201 880h11M1254 880h11" stroke="#4a74c4" strokeWidth="1.500" />
      {TREADS.map(([dx, dy]) => (
        <g key={dx} transform={`translate(${dx} ${dy})`}>
          <Tread d={TREAD} />
        </g>
      ))}
      <Tread d={TREAD_END} />
      <g className="drop-shadow-[2px_3px_2px_rgba(0,0,0,0.35)]">
        <path d="M1348.500 618.500L1303 728" stroke="#ec4d44" strokeWidth="10" strokeLinecap="round" />
        <path d="M1289.500 720.500l27.500 12-25 21.500z" fill="#ec4d44" />
      </g>
    </svg>
  );
}

export default function App() {
  return (
    <div className="flex h-screen flex-col overflow-hidden bg-[#efedf0] font-['Open_Sans','Noto_Sans',sans-serif] text-[14px] text-[#38383c]">
      <Ribbon />
      <div className="flex h-[34px] shrink-0 items-center border-b-2 border-[#c4c5c8] bg-[#d3ebe7] pt-0.5 pl-[3px] text-[13px] text-[#9da5a4] [text-shadow:1px_1px_0_#fff]">
        Modifier | Créer un escalier
      </div>
      <main className="flex min-h-0 grow">
        <aside className="-ml-0.5 flex w-[529px] shrink-0 flex-col border-r-2 border-[#cbc9cc]">
          <Properties />
          <Browser />
        </aside>
        <div className="flex min-w-0 grow flex-col bg-white">
          <Tabs />
          <div className="relative mt-0.5 ml-[3px] min-h-0 grow border-t-5 border-l-5 border-[#00f2ff]">
            <SectionDrawing />
            <p className="absolute top-0 left-0 bg-[#00f2ff] pr-px pb-[3px] font-['Liberation_Sans',Arial,sans-serif] text-[18px] leading-[22px] font-bold text-[#06222a]">
              Masquer/Isoler temporairement
            </p>
          </div>
        </div>
      </main>
    </div>
  );
}
